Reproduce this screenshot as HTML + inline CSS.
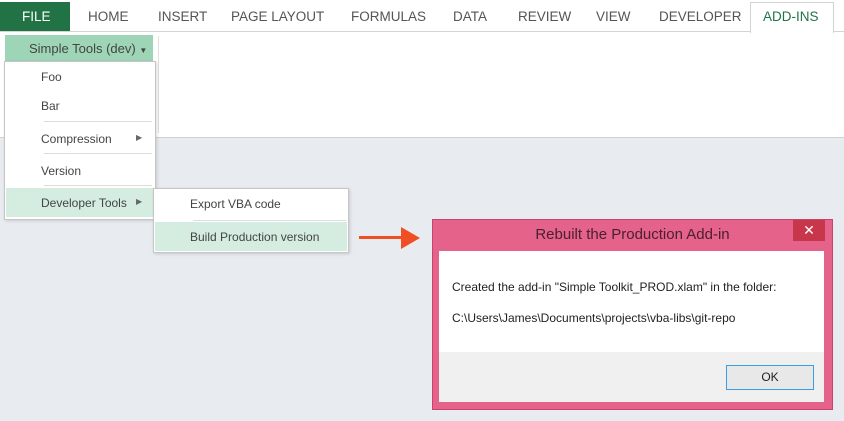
<!DOCTYPE html>
<html><head><style>
body{margin:0;width:844px;height:421px;position:relative;overflow:hidden;background:#e8ebf0;font-family:"Liberation Sans",sans-serif;color:#444}
.a{position:absolute}
.tab{position:absolute;top:9px;font-size:13.5px;color:#555}
.mi{position:absolute;left:41px;font-size:12px;color:#444}
.sep{position:absolute;height:1px;background:#dcdcdc}
</style></head><body>
<div class="a" style="left:0;top:0;width:844px;height:137px;background:#fff;border-bottom:1px solid #d0d0d0"></div>
<div class="a" style="left:0;top:31px;width:844px;height:1px;background:#d4d4d4"></div>
<div class="a" style="left:0;top:2px;width:70px;height:29px;background:#217346"></div>
<div class="tab" style="left:22px;color:#fff">FILE</div>
<div class="tab" style="left:88px">HOME</div>
<div class="tab" style="left:158px">INSERT</div>
<div class="tab" style="left:231px">PAGE LAYOUT</div>
<div class="tab" style="left:351px">FORMULAS</div>
<div class="tab" style="left:453px">DATA</div>
<div class="tab" style="left:518px">REVIEW</div>
<div class="tab" style="left:596px">VIEW</div>
<div class="tab" style="left:659px">DEVELOPER</div>
<div class="a" style="left:750px;top:2px;width:82px;height:30px;background:#fff;border:1px solid #d4d4d4;border-bottom:none"></div>
<div class="tab" style="left:763px;color:#217346">ADD-INS</div>
<div class="a" style="left:5px;top:35px;width:148px;height:26px;background:#9fd5b7"></div>
<div class="a" style="left:29px;top:41px;font-size:13px;color:#444">Simple Tools (dev) <span style="font-size:8px">▼</span></div>
<div class="a" style="left:158px;top:36px;width:1px;height:97px;background:#e0e0e0"></div>
<div class="a" style="left:4px;top:61px;width:150px;height:157px;background:#fff;border:1px solid #c6c6c6;box-shadow:1px 1px 3px rgba(0,0,0,.15)"></div>
<div class="mi" style="top:70px">Foo</div>
<div class="mi" style="top:99px">Bar</div>
<div class="sep" style="left:44px;top:121px;width:108px"></div>
<div class="mi" style="top:132px">Compression</div>
<div class="a" style="left:136px;top:133px;font-size:8px;color:#666">▶</div>
<div class="sep" style="left:44px;top:153px;width:108px"></div>
<div class="mi" style="top:164px">Version</div>
<div class="sep" style="left:44px;top:185px;width:108px"></div>
<div class="a" style="left:6px;top:188px;width:148px;height:29px;background:#d4ede0"></div>
<div class="mi" style="top:196px">Developer Tools</div>
<div class="a" style="left:136px;top:197px;font-size:8px;color:#666">▶</div>
<div class="a" style="left:153px;top:188px;width:194px;height:63px;background:#fff;border:1px solid #c6c6c6;box-shadow:1px 1px 3px rgba(0,0,0,.15)"></div>
<div class="mi" style="left:190px;top:197px">Export VBA code</div>
<div class="sep" style="left:193px;top:220px;width:153px"></div>
<div class="a" style="left:155px;top:222px;width:192px;height:29px;background:#d4ede0"></div>
<div class="mi" style="left:190px;top:230px">Build Production version</div>
<div class="a" style="left:359px;top:236px;width:45px;height:3px;background:#f04e23"></div>
<div class="a" style="left:401px;top:227px;width:0;height:0;border-top:11px solid transparent;border-bottom:11px solid transparent;border-left:19px solid #f04e23"></div>
<div class="a" style="left:432px;top:219px;width:401px;height:191px;background:#e5628a;border:1px solid #c9436c;box-sizing:border-box"></div>
<div class="a" style="left:432px;top:226px;width:401px;text-align:center;font-size:15px;color:#4a2030">Rebuilt the Production Add-in</div>
<div class="a" style="left:793px;top:220px;width:32px;height:21px;background:#c7364a;color:#fff;text-align:center;font-size:14px;line-height:21px">✕</div>
<div class="a" style="left:439px;top:251px;width:385px;height:101px;background:#fff"></div>
<div class="a" style="left:439px;top:352px;width:385px;height:50px;background:#f0f0f0"></div>
<div class="a" style="left:452px;top:280px;font-size:12px;color:#222">Created the add-in "Simple Toolkit_PROD.xlam" in the folder:</div>
<div class="a" style="left:452px;top:311px;font-size:12px;color:#222">C:\Users\James\Documents\projects\vba-libs\git-repo</div>
<div class="a" style="left:726px;top:365px;width:88px;height:25px;background:#e8e8e8;border:1px solid #3c9ce6;box-sizing:border-box;text-align:center;line-height:23px;font-size:12px;color:#222">OK</div>
</body></html>
